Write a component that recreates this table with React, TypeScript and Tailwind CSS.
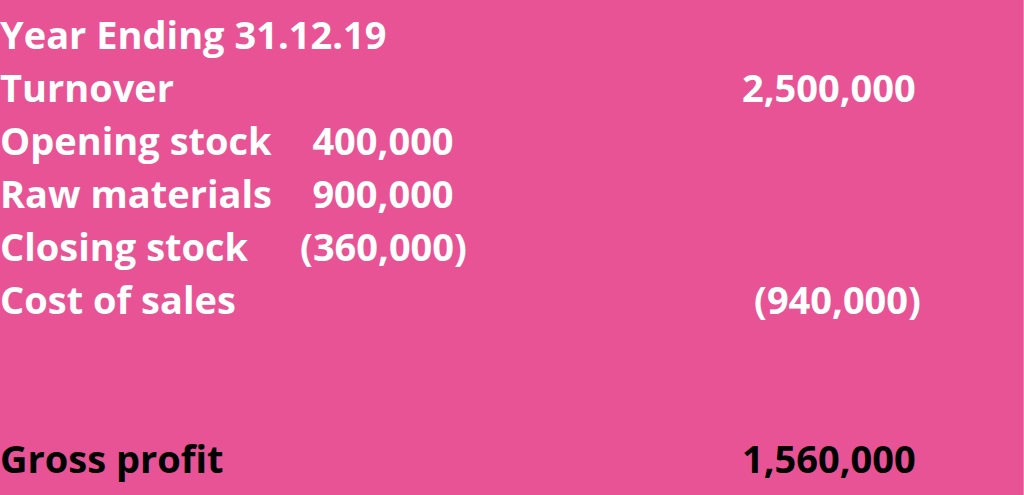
import React from "react";

const rows: { label: string; mid?: string; right?: string; dark?: boolean; pad?: string }[] = [
  { label: "Year Ending 31.12.19" },
  { label: "Turnover", right: "2,500,000", pad: "pl-0" },
  { label: "Opening stock", mid: "400,000" },
  { label: "Raw materials", mid: "900,000" },
  { label: "Closing stock", mid: "(360,000)" },
  { label: "Cost of sales", right: "(940,000)", pad: "pl-[12px]" },
  { label: "" },
  { label: "" },
  { label: "Gross profit", right: "1,560,000", dark: true, pad: "pl-0" },
];

export default function App() {
  return (
    <div
      className="w-[1024px] h-[495px] bg-[#e85395] border-r border-[#f27db3] overflow-hidden pt-[8px]"
      style={{ fontFamily: '"Open Sans", sans-serif' }}
    >
      <div className="grid grid-cols-[300px_166px_276px_auto] font-bold text-[38px] leading-[53px]">
        {rows.map((r, i) => (
          <React.Fragment key={i}>
            <div className={`${r.dark ? "text-black" : "text-white"} whitespace-nowrap h-[53px]`}>{r.label}</div>
            <div className="text-white text-center whitespace-nowrap">{r.mid ?? ""}</div>
            <div />
            <div className={`${r.dark ? "text-black" : "text-white"} ${r.pad ?? ""} whitespace-nowrap`}>{r.right ?? ""}</div>
          </React.Fragment>
        ))}
      </div>
    </div>
  );
}
